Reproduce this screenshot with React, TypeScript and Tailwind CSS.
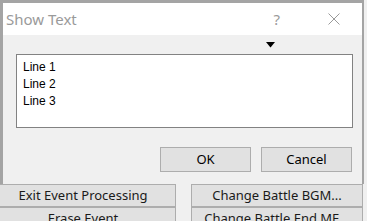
import React from "react";

const rows = [
  ["Exit Event Processing", "Change Battle BGM..."],
  ["Erase Event", "Change Battle End ME..."],
];

const ui = { fontFamily: '"Segoe UI", "Noto Sans", "Open Sans", sans-serif' };

export default function App() {
  return (
    <div className="flex h-[221px] w-[367px] flex-col overflow-hidden bg-[#f0f0f0]">
      <div className="h-[184px] w-[364px] shrink-0 bg-[#a4a4a4] pl-[3px] pt-[3px]">
        <div className="flex h-[181px] w-[359px] flex-col bg-[#f0f0f0]">
          <div className="flex h-[32px] items-center bg-white pl-[3px]">
            <span className="text-[15px] text-[#9a9a9a]" style={ui}>
              Show Text
            </span>
            <span className="ml-auto text-[15px] text-[#9a9a9a]" style={ui}>
              ?
            </span>
            <svg className="ml-[48px] mr-[22px]" width="12" height="12" viewBox="0 0 12 12">
              <path d="M0.5 0.5L11.5 11.5M11.5 0.5L0.5 11.5" stroke="#9a9a9a" strokeWidth="1" />
            </svg>
          </div>
          <div className="flex flex-col pl-[13px] pr-[9px]">
            <div className="flex h-[19px] items-center pl-[250px]">
              <svg width="9" height="6" viewBox="0 0 9 6">
                <path d="M0 0H9L4.5 5.5Z" fill="#000" />
              </svg>
            </div>
            <div
              className="h-[74px] border border-[#828282] bg-white px-[6px] pt-[4px] text-[12px] leading-[17px] text-black"
              style={{ fontFamily: '"Liberation Sans", Arial, sans-serif' }}
            >
              <div>Line 1</div>
              <div>Line 2</div>
              <div>Line 3</div>
            </div>
            <div className="mt-[19px] flex justify-end gap-[10px] pr-[1px]">
              <button
                className="h-[25px] w-[91px] border border-[#adadad] bg-[#e1e1e1] text-[13px] text-black"
                style={ui}
              >
                OK
              </button>
              <button
                className="h-[25px] w-[91px] border border-[#adadad] bg-[#e1e1e1] text-[13px] text-black"
                style={ui}
              >
                Cancel
              </button>
            </div>
          </div>
        </div>
      </div>

      <div className="-ml-[10px] grid grid-cols-[186px_172px] gap-x-[15px]">
        {rows.map(([a, b]) => (
          <React.Fragment key={a}>
            <button
              className="h-[23px] border border-[#adadad] bg-[#e1e1e1] text-[13px] leading-[21px] text-[#1a1a1a]"
              style={ui}
            >
              {a}
            </button>
            <button
              className="h-[23px] border border-[#adadad] bg-[#e1e1e1] text-[13px] leading-[21px] text-[#1a1a1a]"
              style={ui}
            >
              {b}
            </button>
          </React.Fragment>
        ))}
      </div>
    </div>
  );
}
